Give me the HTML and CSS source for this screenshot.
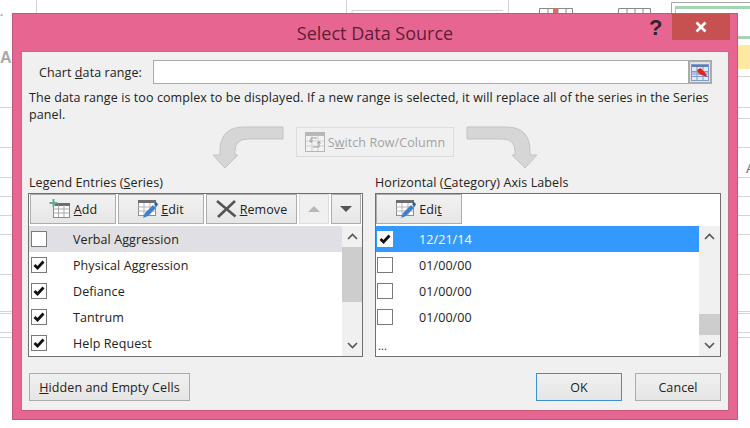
FILE: index.html
```html
<!DOCTYPE html>
<html lang="en">
<head>
<meta charset="utf-8">
<title>Select Data Source</title>
<link rel="stylesheet" href="styles.css">
</head>
<body>
<div class="desktop">
  <svg class="sheet" width="750" height="428" viewBox="0 0 750 428">
    <g stroke="#d4d4d4" fill="none">
      <path d="M36.500 0V13M346.500 0V13M508.500 0V13M352 13V10.500H503"/>
      <path d="M0 107.500H12M0 147.500H12M0 177.500H12M0 196.500H12M0 215.500H12M0 234.500H12M0 274.500H12M0 311.500H12M0 313.500H12M0 332.500H12M0 337.500H12"/>
      <path d="M738 76.500H750M738 107.500H750M738 118.500H750M738 147.500H750M738 177.500H750M738 196.500H750M738 215.500H750M738 234.500H750M738 274.500H750M738 311.500H750M738 313.500H750M738 332.500H750M738 337.500H750"/>
    </g>
    <path d="M0 16L2 13L3 16Z" fill="#b5b5b5"/>
    <path d="M539.500 13V8.500H572.500V13M548 8.500V13M558 8.500V13M566 8.500V13M618.500 13V8.500H650.500V13M627 8.500V13M635 8.500V13M643 8.500V13" stroke="#8a8a8a" fill="none"/>
    <rect x="553" y="8" width="5" height="5" fill="#d0705f"/>
    <path d="M671.500 13V2.500H750" stroke="#a8a8a8" fill="none"/>
    <rect x="675" y="6" width="75" height="3" fill="#a3d5b5"/>
    <rect x="675" y="9" width="1" height="4" fill="#a3d5b5"/>
    <rect x="738" y="36" width="12" height="3" fill="#a3d5b5"/>
    <rect x="738" y="45" width="12" height="24" fill="#fde9a0"/>
  </svg>
  <span class="side-letter side-letter-left">A</span>
  <span class="side-letter side-letter-right">A</span>

  <section class="dialog">
    <header class="titlebar">
      <h1 class="title">Select Data Source</h1>
      <span class="help">?</span>
      <span class="close">
        <svg width="12" height="12" viewBox="0 0 12 12"><path d="M1.500 1.500L10.500 10.500M10.500 1.500L1.500 10.500" stroke="#fff" stroke-width="2.600" fill="none"/></svg>
      </span>
    </header>
    <div class="client">
      <div class="range-row">
        <label class="range-label">Chart <u>d</u>ata range:</label>
        <div class="range-input">
          <span class="range-picker">
            <svg width="18" height="17" viewBox="0 0 18 17">
              <rect x=".5" y=".5" width="17" height="16" fill="#dfe8f5" stroke="#7d9ccb"/>
              <rect x="1" y="1" width="16" height="2" fill="#5f7fae"/>
              <rect x="1" y="8" width="16" height="3" fill="#a9c1e3"/>
              <path d="M1 7.500H17M1 12.500H17M6 3V16M12 3V16" stroke="#7d9ccb" fill="none"/>
              <path d="M6 6L9.500 4L14 8.500L16.500 13L12 11.500L8 10Z" fill="#e0261c"/>
            </svg>
          </span>
        </div>
      </div>
      <p class="note">The data range is too complex to be displayed. If a new range is selected, it will replace all of the series in the Series panel.</p>

      <div class="switch-row">
        <svg class="arrow" width="72" height="44" viewBox="0 0 72 44">
          <path d="M71 1V13H36Q23 13 23 25V29H26L13 42L1 29H8V25Q8 1 32 1Z" fill="#d6d6d6" stroke="#c3c3c3"/>
        </svg>
        <button class="btn btn-switch" type="button" disabled>
          <svg width="20" height="20" viewBox="0 0 20 20">
            <rect x=".5" y=".5" width="19" height="19" fill="#f3f3f3" stroke="#b5b5b5"/>
            <rect x="1" y="1" width="18" height="3" fill="#b8b8b8"/>
            <path d="M1 9H19M1 14H19M7 4V19M13 4V19" stroke="#cfcfcf" fill="none"/>
            <path d="M12 6H6V10M4.500 8.500L6 10.500L7.500 8.500M8 15H14V10M12.500 11.500L14 9.500L15.500 11.500" stroke="#9a9a9a" fill="none"/>
          </svg>
          <span>S<u>w</u>itch Row/Column</span>
        </button>
        <svg class="arrow arrow-flip" width="72" height="44" viewBox="0 0 72 44">
          <path d="M71 1V13H36Q23 13 23 25V29H26L13 42L1 29H8V25Q8 1 32 1Z" fill="#d6d6d6" stroke="#c3c3c3"/>
        </svg>
      </div>

      <div class="columns">
        <div class="col col-series">
          <div class="col-title">Legend Entries (<u>S</u>eries)</div>
          <div class="panel">
            <div class="toolbar">
              <button class="btn tool tool-wide" type="button">
                <svg width="22" height="20" viewBox="0 0 22 20">
                  <rect x="4.500" y="5.500" width="16" height="13" fill="#fff" stroke="#8c8c8c"/>
                  <rect x="6" y="4" width="15" height="3" fill="#6d6d6d"/>
                  <path d="M4.500 10H20.500M4.500 14H20.500M9.500 6V18M15 6V18" stroke="#a9a9a9" fill="none"/>
                  <path d="M4.500 0V8M.5 4H8.500" stroke="#5fae8d" stroke-width="2" fill="none"/>
                </svg>
                <span><u>A</u>dd</span>
              </button>
              <button class="btn tool tool-wide" type="button">
                <svg class="edit-icon" width="20" height="20" viewBox="0 0 20 20">
                  <rect x=".5" y="1.500" width="17" height="15" fill="#fff" stroke="#8c8c8c"/>
                  <rect x="0" y="1" width="18" height="3" fill="#6d6d6d"/>
                  <path d="M.5 8H17.500M.5 12H17.500M6 4V16M12 4V16" stroke="#b5b5b5" fill="none"/>
                  <path d="M5 19L7 14L15 6L18 9L10 17Z" fill="#3f80c8"/>
                  <path d="M16 5L18 3L20 5L18.500 8Z" fill="#2b5e9e"/>
                </svg>
                <span><u>E</u>dit</span>
              </button>
              <button class="btn tool tool-remove" type="button">
                <svg width="21" height="18" viewBox="0 0 21 18">
                  <path d="M1 1L19.500 16.500M19 1L2 17" stroke="#555" stroke-width="2.600" fill="none"/>
                </svg>
                <span><u>R</u>emove</span>
              </button>
              <button class="btn tool tool-arrow tool-arrow-off" type="button">
                <svg width="12" height="6" viewBox="0 0 12 6"><path d="M0 6L6 0L12 6Z" fill="#b8b8b8"/></svg>
              </button>
              <button class="btn tool tool-arrow" type="button">
                <svg width="12" height="6" viewBox="0 0 12 6"><path d="M0 0L6 6L12 0Z" fill="#555"/></svg>
              </button>
            </div>
            <div class="listbox">
              <ul class="rows">
                <li class="row row-hover"><span class="check"></span><span class="row-text">Verbal Aggression</span></li>
                <li class="row"><span class="check"><svg class="tick" width="12" height="10" viewBox="0 0 12 10"><path d="M1.500 5L4.500 8L10.500 1.500" stroke="#111" stroke-width="2.800" fill="none"/></svg></span><span class="row-text">Physical Aggression</span></li>
                <li class="row"><span class="check"><svg class="tick" width="12" height="10" viewBox="0 0 12 10"><path d="M1.500 5L4.500 8L10.500 1.500" stroke="#111" stroke-width="2.800" fill="none"/></svg></span><span class="row-text">Defiance</span></li>
                <li class="row"><span class="check"><svg class="tick" width="12" height="10" viewBox="0 0 12 10"><path d="M1.500 5L4.500 8L10.500 1.500" stroke="#111" stroke-width="2.800" fill="none"/></svg></span><span class="row-text">Tantrum</span></li>
                <li class="row"><span class="check"><svg class="tick" width="12" height="10" viewBox="0 0 12 10"><path d="M1.500 5L4.500 8L10.500 1.500" stroke="#111" stroke-width="2.800" fill="none"/></svg></span><span class="row-text">Help Request</span></li>
              </ul>
              <div class="scrollbar">
                <span class="scroll-btn"><svg width="11" height="7" viewBox="0 0 11 7"><path d="M1 6L5.500 1.500L10 6" stroke="#555" stroke-width="1.600" fill="none"/></svg></span>
                <span class="scroll-track"><span class="thumb thumb-series"></span></span>
                <span class="scroll-btn"><svg width="11" height="7" viewBox="0 0 11 7"><path d="M1 1L5.500 5.500L10 1" stroke="#555" stroke-width="1.600" fill="none"/></svg></span>
              </div>
            </div>
          </div>
        </div>

        <div class="col col-axis">
          <div class="col-title">Horizontal (<u>C</u>ategory) Axis Labels</div>
          <div class="panel">
            <div class="toolbar">
              <button class="btn tool tool-wide" type="button">
                <svg class="edit-icon" width="20" height="20" viewBox="0 0 20 20">
                  <rect x=".5" y="1.500" width="17" height="15" fill="#fff" stroke="#8c8c8c"/>
                  <rect x="0" y="1" width="18" height="3" fill="#6d6d6d"/>
                  <path d="M.5 8H17.500M.5 12H17.500M6 4V16M12 4V16" stroke="#b5b5b5" fill="none"/>
                  <path d="M5 19L7 14L15 6L18 9L10 17Z" fill="#3f80c8"/>
                  <path d="M16 5L18 3L20 5L18.500 8Z" fill="#2b5e9e"/>
                </svg>
                <span>Edi<u>t</u></span>
              </button>
            </div>
            <div class="listbox">
              <ul class="rows">
                <li class="row row-selected"><span class="check"><svg class="tick" width="12" height="10" viewBox="0 0 12 10"><path d="M1.500 5L4.500 8L10.500 1.500" stroke="#111" stroke-width="2.800" fill="none"/></svg></span><span class="row-text">12/21/14</span></li>
                <li class="row"><span class="check"></span><span class="row-text">01/00/00</span></li>
                <li class="row"><span class="check"></span><span class="row-text">01/00/00</span></li>
                <li class="row"><span class="check"></span><span class="row-text">01/00/00</span></li>
                <li class="row row-more">...</li>
              </ul>
              <div class="scrollbar">
                <span class="scroll-btn"><svg width="11" height="7" viewBox="0 0 11 7"><path d="M1 6L5.500 1.500L10 6" stroke="#555" stroke-width="1.600" fill="none"/></svg></span>
                <span class="scroll-track"><span class="thumb thumb-axis"></span></span>
                <span class="scroll-btn"><svg width="11" height="7" viewBox="0 0 11 7"><path d="M1 1L5.500 5.500L10 1" stroke="#555" stroke-width="1.600" fill="none"/></svg></span>
              </div>
            </div>
          </div>
        </div>
      </div>

      <div class="footer">
        <button class="btn btn-foot btn-hidden" type="button"><span><u>H</u>idden and Empty Cells</span></button>
        <div class="footer-actions">
          <button class="btn btn-foot btn-ok" type="button">OK</button>
          <button class="btn btn-foot" type="button">Cancel</button>
        </div>
      </div>
    </div>
  </section>
</div>
</body>
</html>
```

FILE: styles.css
```css
* { box-sizing: border-box; }
html, body { margin: 0; padding: 0; }
body {
  width: 750px;
  height: 428px;
  overflow: hidden;
  background: #fff;
  font-family: "Open Sans", "Noto Sans", sans-serif;
  font-size: 12.5px;
  letter-spacing: .09px;
  color: #222;
}
u { text-underline-offset: 1px; }
.desktop { position: relative; width: 750px; height: 428px; overflow: hidden; }
.sheet { position: absolute; left: 0; top: 0; }
.side-letter {
  position: absolute;
  font-family: "Liberation Sans", sans-serif;
  font-weight: 700;
  font-size: 16px;
  color: #a8a8a8;
}
.side-letter-left { left: 0; top: 49px; }
.side-letter-right { left: 746px; top: 161px; font-weight: 400; font-size: 13px; color: #666; }

.dialog {
  position: absolute;
  left: 12px;
  top: 13px;
  width: 726px;
  height: 407px;
  background: #e66691;
  border: 1px solid #c4577c;
  display: flex;
  flex-direction: column;
  padding: 0 8px 8px;
}
.titlebar { height: 37px; display: flex; align-items: flex-start; position: relative; flex: none; }
.title {
  margin: 0;
  width: 100%;
  text-align: center;
  font-family: "Open Sans", sans-serif;
  font-weight: 400;
  font-size: 18px;
  letter-spacing: 0;
  line-height: 24px;
  padding-top: 7px;
  color: #5e1d38;
}
.help {
  position: absolute;
  left: 628px;
  top: 1px;
  font-family: "Liberation Sans", sans-serif;
  font-weight: 700;
  font-size: 22px;
  line-height: 26px;
  color: #33222a;
}
.close {
  position: absolute;
  left: 651px;
  top: 0;
  width: 58px;
  height: 26px;
  background: #c75050;
  display: flex;
  align-items: center;
  justify-content: center;
}
.client {
  flex: 1;
  background: #f0f0f0;
  border: 1px solid #bd6f88;
  border-bottom-color: #c4577c;
  padding: 8px 7px 9px 7px;
  display: flex;
  flex-direction: column;
}
.range-row { display: flex; align-items: center; height: 24px; padding-left: 10px; }
.range-label { width: 114px; flex: none; }
.range-input {
  width: 559px;
  height: 24px;
  background: #fff;
  border: 1px solid #ababab;
  display: flex;
  justify-content: flex-end;
}
.range-picker {
  width: 24px;
  height: 24px;
  margin: -1px -1px -1px 0;
  background: #e4e4e4;
  border: 2px solid #ababab;
  display: flex;
  align-items: center;
  justify-content: center;
  flex: none;
}
.note { margin: 5px 0 0; line-height: 17px; height: 34px; width: 690px; }

.switch-row { display: flex; align-items: flex-start; margin-top: 3px; height: 44px; padding-left: 183px; }
.arrow { flex: none; }
.arrow-flip { transform: scaleX(-1); }
.btn {
  font: inherit;
  letter-spacing: inherit;
  color: #222;
  background: linear-gradient(#f2f2f2, #e6e6e6);
  border: 1px solid #acacac;
  padding: 0;
  margin: 0;
  display: flex;
  align-items: center;
  justify-content: center;
  gap: 3px;
}
.btn-switch {
  width: 158px;
  height: 30px;
  margin: 1px 12px 0;
  background: #f0f0f0;
  border-color: #dcdcdc;
  color: #a3a3a3;
}

.columns { display: flex; gap: 12px; margin-top: 6px; }
.col-title { line-height: 14px; height: 17px; }
.col-series { width: 334px; }
.col-series .panel { width: 335px; margin-left: -1px; }
.col-axis { width: 347px; }
.panel { background: #fff; border: 1px solid #6f6f6f; height: 164px; display: flex; flex-direction: column; }
.toolbar { display: flex; gap: 2px; height: 32px; padding-left: 1px; flex: none; }
.col-axis .toolbar { padding-left: 0; }
.tool { height: 30px; }
.tool-wide { width: 86px; }
.tool-remove { width: 91px; }
.tool-arrow { width: 30px; }
.tool-arrow-off { background: #f0f0f0; border-color: #dcdcdc; }
.listbox { display: flex; flex: 1; min-height: 0; }
.rows { list-style: none; margin: 0; padding: 0; flex: 1; min-width: 0; }
.row { height: 26px; display: flex; align-items: center; padding-left: 2px; }
.col-axis .row { padding-left: 1px; }
.row-hover { background: #e0e0e4; }
.row-selected { background: #3399ff; color: #fff; }
.check {
  width: 16px;
  height: 16px;
  flex: none;
  background: #fff;
  border: 1px solid #7a7a7a;
  display: flex;
  align-items: center;
  justify-content: center;
}
.row-selected .check { border-color: #fff; }
.row-text { margin-left: 26px; }
.col-axis .row.row-more { padding-left: 2px; line-height: 1; align-items: flex-end; padding-bottom: 5px; font-size: 11px; }
.scrollbar { width: 21px; flex: none; background: #f0f0f0; display: flex; flex-direction: column; }
.col-series .scrollbar { width: 20px; }
.scroll-btn { height: 21px; flex: none; display: flex; align-items: center; justify-content: center; }
.scroll-track { flex: 1; position: relative; display: block; }
.thumb { display: block; background: #cdcdcd; }
.thumb-series { height: 55px; }
.thumb-axis { height: 21px; margin-top: 67px; }

.footer { display: flex; justify-content: space-between; margin-top: 16px; width: 692px; }
.footer-actions { display: flex; gap: 13px; }
.btn-foot { height: 28px; width: 86px; background: linear-gradient(#f0f0f0, #e5e5e5); }
.btn-hidden { width: 161px; }
.btn-ok { border-color: #3c8fd6; }
```
